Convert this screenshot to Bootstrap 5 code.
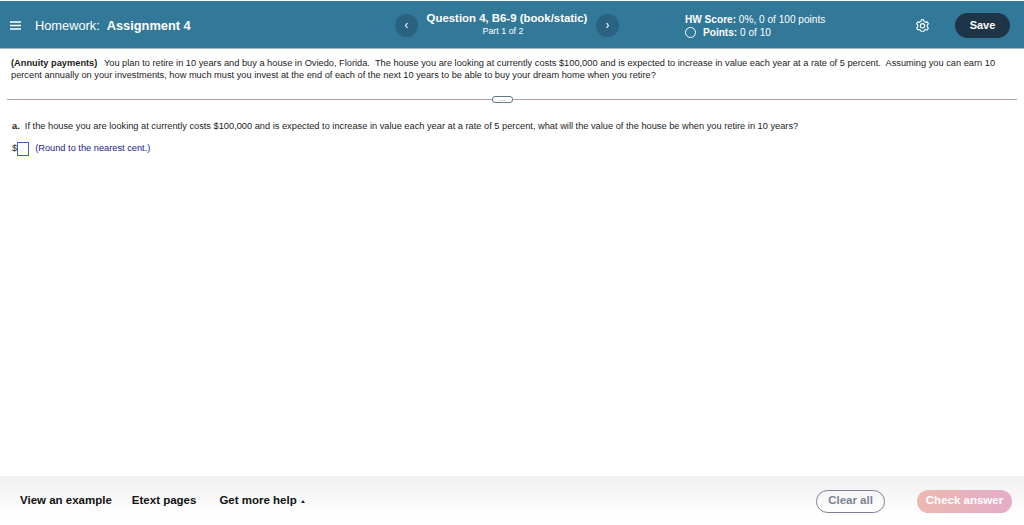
<!DOCTYPE html>
<html lang="en"><head><meta charset="utf-8"><title>Homework</title>
<link href="https://cdn.jsdelivr.net/npm/bootstrap@5.3.0/dist/css/bootstrap.min.css" rel="stylesheet">
<style>
html,body{height:525px;overflow:hidden;background:#fff;font-family:"Liberation Sans",Arial,sans-serif;color:#111;}
.shell{height:525px;}
.topbar{height:48px;margin-top:1px;padding-top:1px;background:#327898;color:#fff;border-bottom:1px solid #9db9c8;}
.menu-ic{margin-left:10px;width:11px;height:9px;margin-right:14px;}
.hw-title{font-size:12.8px;width:360px;padding-top:2px;}
.hw-title b{margin-left:7px;}
.circ{width:23px;height:23px;border-radius:50%;background:#2a6282;color:#fff;}
.q-block{width:178px;line-height:1.1;margin-top:-1px;}
.q-title{font-size:11.4px;font-weight:700;}
.q-part{font-size:8.9px;margin-top:3px;margin-right:8px;}
.score{width:231px;margin-left:66px;font-size:10.1px;line-height:13px;padding-top:1px;}
.score .ring{width:11px;height:11px;border:1.5px solid #fff;border-radius:50%;margin-right:7px;}
.savebtn{width:55px;height:25px;background:#1e3548;color:#fff;font-size:11px;font-weight:700;border:0;border-radius:13px;padding:0;margin-left:26px;}
.gear{width:13px;height:13px;}
.qtext{font-size:9.25px;line-height:12px;padding:8px 20px 0 11px;height:50px;color:#1c1c1c;}
.divider{margin:0 7px 0 7px;height:1px;background:#b39ca6;}
.pill{width:21px;height:7px;border:1px solid #62788a;border-radius:3px;background:#fff;top:-3px;left:485px;font-size:7px;line-height:3px;letter-spacing:.5px;color:#445;}
.part-a{font-size:9.25px;line-height:11px;padding:21px 0 0 12px;color:#1c1c1c;}
.answer{font-size:9.25px;padding:10px 0 0 12px;color:#1c1c1c;}
.ansbox{width:12px;height:14px;border:1px solid #3a66b5;margin:0 6px 0 0;}
.hint{color:#1a1a8c;}
.footbar{height:41px;margin-top:auto;margin-bottom:8px;background:linear-gradient(#f0f0f0,#fff);padding:9px 12px 0 20px;font-size:11.5px;font-weight:700;}
.lnk{margin-right:20px;}
.lnk-b{margin-right:23px;}
.caret{width:0;height:0;border-left:2.5px solid transparent;border-right:2.5px solid transparent;border-bottom:3px solid #222;margin-left:4px;vertical-align:1px;}
.clearbtn{width:69px;height:23px;border:1px solid #7b8296;border-radius:12px;color:#7b8296;background:#fff0;font-size:11.5px;font-weight:700;padding:0;margin-right:32px;}
.checkbtn{width:95px;height:23px;border:0;border-radius:12px;color:#fff;background:linear-gradient(90deg,#edb8b0,#e4acc8);font-size:11.5px;font-weight:700;padding:0;}
</style></head>
<body>
<div class="shell d-flex flex-column">
<div class="topbar d-flex align-items-center">
 <svg class="menu-ic flex-shrink-0" viewBox="0 0 11 9"><path d="M0 1h11M0 4.500h11M0 8h11" stroke="#fff" stroke-width="1.300"/></svg>
 <div class="hw-title">Homework:<b>Assignment 4</b></div>
 <div class="circ d-flex align-items-center justify-content-center flex-shrink-0"><svg width="5" height="7" viewBox="0 0 5 7"><path d="M3.500 1 1.500 3.500 3.500 6" fill="none" stroke="#fff" stroke-width="1.100"/></svg></div>
 <div class="q-block text-center"><div class="q-title">Question 4, B6-9 (book/static)</div><div class="q-part">Part 1 of 2</div></div>
 <div class="circ d-flex align-items-center justify-content-center flex-shrink-0"><svg width="5" height="7" viewBox="0 0 5 7"><path d="M1.500 1 3.500 3.500 1.500 6" fill="none" stroke="#fff" stroke-width="1.100"/></svg></div>
 <div class="score"><div><b>HW Score:</b> 0%, 0 of 100 points</div><div class="d-flex align-items-center"><span class="ring d-inline-block"></span><span><b>Points:</b> 0 of 10</span></div></div>
 <svg class="gear flex-shrink-0" viewBox="0 0 24 24" fill="none" stroke="#fff" stroke-width="2"><path d="M10 1.500h4l1 3 2.800 1.600 3.100-.7 2 3.500-2.100 2.300v3.200l2.100 2.300-2 3.500-3.100-.7-2.800 1.600-1 3h-4l-1-3-2.800-1.600-3.100.7-2-3.500 2.100-2.300v-3.200L1.100 8.900l2-3.500 3.100.7L9 4.500z"/><circle cx="12" cy="12.500" r="4"/></svg>
 <button class="savebtn btn flex-shrink-0">Save</button>
</div>
<div class="qtext"><div class="text-nowrap"><b>(Annuity payments)</b><span class="ms-1">&nbsp;You plan to retire in 10 years and buy a house in Oviedo, Florida.&nbsp; The house you are looking at currently costs $100,000 and is expected to increase in value each year at a rate of 5 percent.&nbsp; Assuming you can earn 10</span></div><div>percent annually on your investments, how much must you invest at the end of each of the next 10 years to be able to buy your dream home when you retire?</div></div>
<div class="divider position-relative"><div class="pill position-absolute text-center">...</div></div>
<div class="part-a"><b>a.</b>&nbsp; If the house you are looking at currently costs $100,000 and is expected to increase in value each year at a rate of 5 percent, what will the value of the house be when you retire in 10 years?</div>
<div class="answer d-flex align-items-center"><span>$</span><span class="ansbox d-inline-block"></span><span class="hint">(Round to the nearest cent.)</span></div>
<div class="footbar d-flex align-items-center">
 <span class="lnk">View an example</span><span class="lnk-b">Etext pages</span><span>Get more help<span class="caret d-inline-block"></span></span>
 <button class="clearbtn btn ms-auto">Clear all</button><button class="checkbtn btn">Check answer</button>
</div>
</div>
<script src="https://cdn.jsdelivr.net/npm/bootstrap@5.3.0/dist/js/bootstrap.bundle.min.js"></script>
</body></html>
